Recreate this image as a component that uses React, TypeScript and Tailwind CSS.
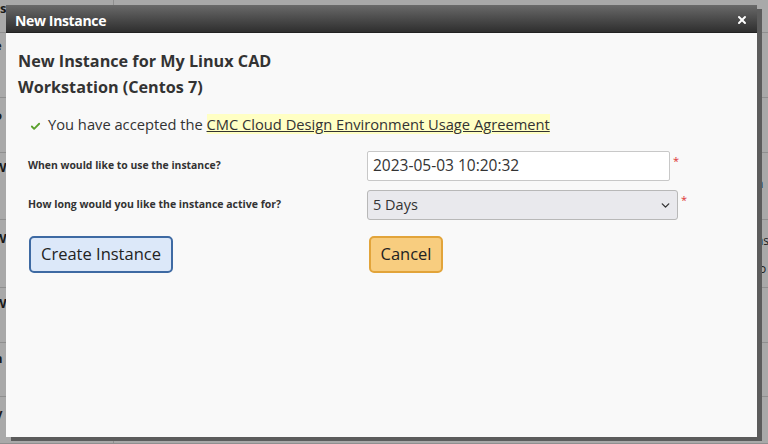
import React from 'react';
import { X, ChevronDown, Check } from 'lucide-react';

const bgRows = [
  { h: 33, pt: 0, left: 'rs', right: [] as string[] },
  { h: 65, pt: 4, left: 'e', right: [] },
  { h: 55, pt: 9, left: 'o', right: [] },
  { h: 67, pt: 6, left: 'W', right: ['s', 'n'] },
  { h: 68, pt: 10, left: 'W', right: ['ns', 't', 'io'] },
  { h: 55, pt: 7, left: 'W', right: [] },
  { h: 54, pt: 7, left: 'n', right: [] },
  { h: 47, pt: 10, left: 'V', right: [] },
];

function BackgroundTable() {
  return (
    <div className="flex flex-col bg-[#a9a9a9]">
      {bgRows.map((row, i) => (
        <div key={i} className="flex border-b border-[#8f8f8f]" style={{ height: row.h }}>
          <div
            className="w-[120px] border-r border-[#8f8f8f] -ml-[6px] text-[13px] leading-[16px] text-[#1a1a1a] font-bold"
            style={{ paddingTop: row.pt }}
          >
            {row.left}
          </div>
          <div className="flex-1" />
          <div
            className="w-[12px] flex flex-col text-[12px] leading-[14px] text-[#1a1a1a]"
            style={{ paddingTop: row.pt + 4 }}
          >
            {row.right.map((t, j) => (
              <span key={j}>{t}</span>
            ))}
          </div>
        </div>
      ))}
    </div>
  );
}

export default function App() {
  return (
    <div className="relative w-[768px] h-[444px] overflow-hidden bg-[#a9a9a9] font-['Open_Sans',sans-serif]">
      <BackgroundTable />

      {/* Modal overlay */}
      <div className="absolute left-[6px] top-[5px] w-[751px] h-[432px] flex flex-col bg-[#f9f9f9] shadow-[5px_4px_0_0_#5c5c5c]">
        <div className="h-[28px] flex items-center justify-between px-[9px] pt-[3px] bg-gradient-to-b from-[#6a6a6a] to-[#2f2f2f] border-b border-[#222]">
          <span className="text-white text-[14px] font-bold tracking-tight">New Instance</span>
          <X className="w-[12px] h-[12px] text-white" strokeWidth={4} />
        </div>

        <div className="flex flex-col pt-[15px] pl-[12px] text-[#333]">
          <h2 className="text-[16.2px] leading-[26px] font-bold">
            New Instance for My Linux CAD
            <br />
            Workstation (Centos 7)
          </h2>

          <div className="flex items-center mt-[14px] pl-[12px] text-[14.7px] leading-[20px]">
            <Check className="w-[11px] h-[11px] text-[#5aa02c] mr-[7px] mt-[5px]" strokeWidth={4} />
            <span>You have accepted the&nbsp;</span>
            <span className="bg-[#ffffc4] underline">CMC Cloud Design Environment Usage Agreement</span>
          </div>

          <div className="flex items-center mt-[17px] pl-[10px]">
            <label className="w-[339px] text-[10.4px] font-bold">When would like to use the instance?</label>
            <div className="w-[303px] h-[30px] flex items-center px-[5px] bg-white border border-[#c8c8c8] rounded-[2px] text-[15.5px] text-[#333]">
              2023-05-03 10:20:32
            </div>
            <span className="self-start ml-[3px] mt-[2px] text-[#d33] text-[11px]">*</span>
          </div>

          <div className="flex items-center mt-[9px] pl-[10px]">
            <label className="w-[339px] text-[10.5px] font-bold">How long would you like the instance active for?</label>
            <div className="w-[311px] h-[30px] flex items-center justify-between px-[5px] bg-[#e9e9ed] border border-[#b8b8b8] rounded-[3px] text-[14.5px] text-[#333]">
              <span>5 Days</span>
              <ChevronDown className="w-[13px] h-[13px] text-[#333]" strokeWidth={2.5} />
            </div>
            <span className="self-start ml-[3px] mt-[2px] text-[#d33] text-[11px]">*</span>
          </div>

          <div className="flex items-center mt-[16px] pl-[11px]">
            <div className="w-[340px]">
              <button className="w-[144px] h-[37px] bg-[#dce8f9] border-2 border-[#3e6aa3] rounded-[5px] text-[16.5px] text-[#222]">
                Create Instance
              </button>
            </div>
            <button className="w-[74px] h-[37px] bg-[#f8cd7f] border-2 border-[#e2a43a] rounded-[5px] text-[16.5px] text-[#222]">
              Cancel
            </button>
          </div>
        </div>
      </div>
    </div>
  );
}
